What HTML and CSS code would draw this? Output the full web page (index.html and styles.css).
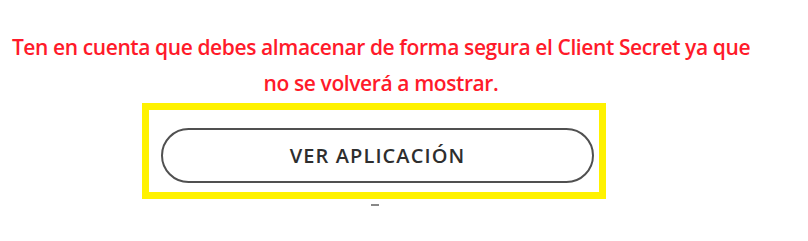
FILE: index.html
```html
<!DOCTYPE html>
<html lang="es">
<head>
<meta charset="utf-8">
<link rel="stylesheet" href="styles.css">
</head>
<body>
<div class="page">
  <p class="warning">Ten en cuenta que debes almacenar de forma segura el Client Secret ya que<br>no se volverá a mostrar.</p>
  <div class="highlight">
    <button class="btn">VER APLICACIÓN</button>
  </div>
  <div class="dash"></div>
</div>
</body>
</html>
```
FILE: styles.css
```css
html, body {
  margin: 0;
  padding: 0;
  background: #fff;
}
.page {
  width: 762px;
  height: 241px;
  display: flex;
  flex-direction: column;
  align-items: center;
  padding-top: 29px;
  box-sizing: border-box;
}
.warning {
  margin: 0;
  font-family: "Open Sans", sans-serif;
  font-weight: 600;
  font-size: 21px;
  line-height: 36px;
  color: #ff1a2a;
  text-align: center;
  letter-spacing: -0.4px;
  white-space: nowrap;
}
.highlight {
  margin-top: 2px;
  margin-left: -14px;
  width: 438px;
  height: 64px;
  border: 7px solid #fff200;
  display: flex;
  align-items: flex-start;
  justify-content: flex-start;
  padding: 18px 0 0 12px;
}
.btn {
  width: 433px;
  height: 55px;
  border: 2px solid #505050;
  border-radius: 28px;
  background: #fff;
  font-family: "Open Sans", sans-serif;
  font-weight: 600;
  font-size: 20px;
  color: #2e2e2e;
  letter-spacing: 1.1px;
  padding: 0;
}
.dash {
  margin-top: 5px;
  margin-left: -12px;
  width: 8px;
  height: 2px;
  background: #888;
}
```
